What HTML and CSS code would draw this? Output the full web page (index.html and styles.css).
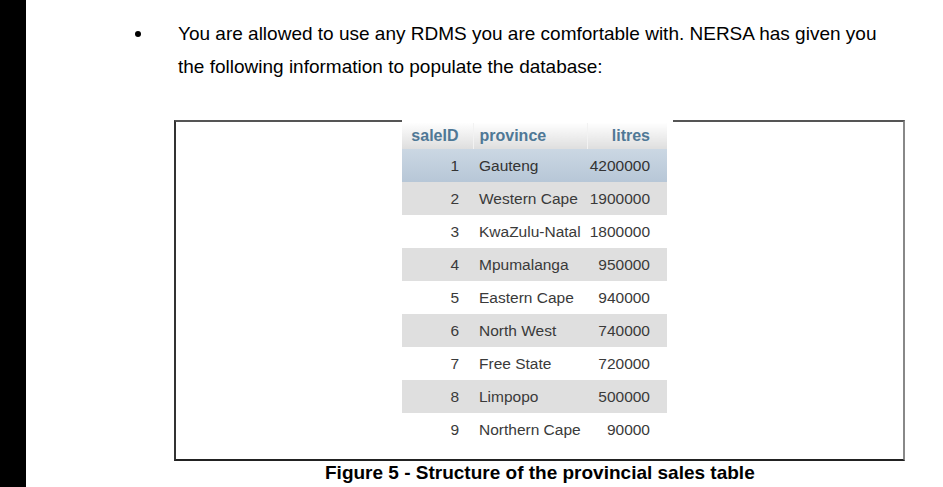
FILE: index.html
```html
<!DOCTYPE html>
<html>
<head>
<meta charset="utf-8">
<link rel="stylesheet" href="styles.css">
</head>
<body>
<div class="page">
  <div class="strip"></div>
  <main class="doc">
    <ul class="bullets">
      <li>You are allowed to use any RDMS you are comfortable with. NERSA has given you the following information to populate the database:</li>
    </ul>
    <figure class="fig">
      <div class="frame">
        <div class="shot">
          <table class="sales">
            <thead>
              <tr><th class="c-id">saleID</th><th class="c-prov">province</th><th class="c-lit">litres</th></tr>
            </thead>
            <tbody>
              <tr class="sel"><td class="c-id">1</td><td class="c-prov">Gauteng</td><td class="c-lit">4200000</td></tr>
              <tr class="odd"><td class="c-id">2</td><td class="c-prov">Western Cape</td><td class="c-lit">1900000</td></tr>
              <tr><td class="c-id">3</td><td class="c-prov">KwaZulu-Natal</td><td class="c-lit">1800000</td></tr>
              <tr class="odd"><td class="c-id">4</td><td class="c-prov">Mpumalanga</td><td class="c-lit">950000</td></tr>
              <tr><td class="c-id">5</td><td class="c-prov">Eastern Cape</td><td class="c-lit">940000</td></tr>
              <tr class="odd"><td class="c-id">6</td><td class="c-prov">North West</td><td class="c-lit">740000</td></tr>
              <tr><td class="c-id">7</td><td class="c-prov">Free State</td><td class="c-lit">720000</td></tr>
              <tr class="odd"><td class="c-id">8</td><td class="c-prov">Limpopo</td><td class="c-lit">500000</td></tr>
              <tr><td class="c-id">9</td><td class="c-prov">Northern Cape</td><td class="c-lit">90000</td></tr>
            </tbody>
          </table>
        </div>
      </div>
      <figcaption class="caption">Figure 5 - Structure of the provincial sales table</figcaption>
    </figure>
  </main>
</div>
</body>
</html>
```
FILE: styles.css
```css
* { box-sizing: border-box; }
html, body { margin: 0; padding: 0; background: #fff; }
.page {
  display: flex;
  width: 943px;
  height: 487px;
  overflow: hidden;
  font-family: "Liberation Sans", Arial, sans-serif;
  color: #000;
}
.strip { width: 26px; flex: none; background: #000; }
.doc { flex: 1; padding-top: 17px; }
.bullets {
  margin: 0;
  padding: 0 0 0 152px;
  list-style: none;
}
.bullets li {
  position: relative;
  width: 712px;
  font-size: 19px;
  line-height: 33px;
}
.bullets li::before {
  content: "";
  position: absolute;
  left: -43px;
  top: 14px;
  width: 6px;
  height: 6px;
  border-radius: 50%;
  background: #000;
}
.fig { margin: 37px 0 0 148px; padding: 0; }
.frame {
  width: 731px;
  height: 341px;
  border-top: 2px solid #555;
  border-left: 2px solid #333;
  border-bottom: 2px solid #222;
  border-right: 2px solid #888;
}
.shot {
  width: 271px;
  margin: -3px 0 0 226px;
  padding: 4px 6px 0 0;
  background: #fff;
}
.sales {
  width: 265px;
  border-collapse: collapse;
  font-size: 15.5px;
  color: #3a3a3a;
}
.sales th {
  height: 26px;
  padding: 0;
  font-size: 16px;
  font-weight: bold;
  color: #4f7896;
  background: linear-gradient(#fefefe, #dedede);
  border-left: 1px solid #f2f2f2;
  vertical-align: middle;
}
.sales th:first-child { border-left: 0; }
.sales td { height: 33px; padding: 0; vertical-align: middle; }
.sales tr.odd td { background: #dfdfdf; }
.sales tr.sel td { background: linear-gradient(#cbd7e3, #b7c7d7); color: #333; }
.c-id { width: 71px; text-align: right; padding-right: 14px !important; }
.c-prov { width: 114px; text-align: left; padding-left: 6px !important; }
.c-lit { width: 80px; text-align: right; padding-right: 17px !important; }
.caption {
  margin: 2px 0 0 151px;
  font-weight: bold;
  font-size: 19px;
  line-height: 20px;
}
```
